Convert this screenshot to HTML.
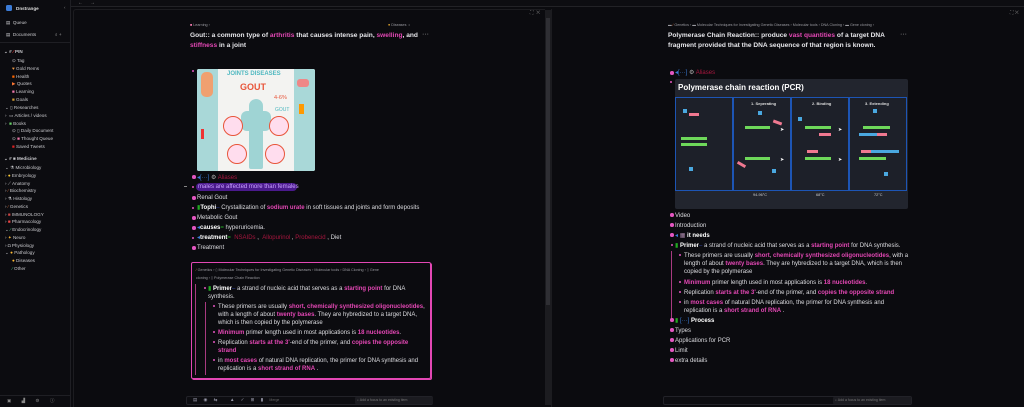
<!DOCTYPE html>
<html><head><meta charset="utf-8"><style>
*{margin:0;padding:0;box-sizing:border-box}
body{width:1024px;height:407px;background:#0b0b0f;font-family:"Liberation Sans",sans-serif;color:#d8d8dc;position:relative;overflow:hidden}
.a{position:absolute;white-space:nowrap}
.sb{font-size:4.6px;color:#c8c8cc}
.t{font-size:6px;color:#dcdce0;line-height:8px}
.p{color:#e347b4;font-weight:bold}
.r{color:#a8163e}
.b{font-weight:bold;color:#fff}
.dot{position:absolute;width:3.6px;height:3.6px;border-radius:50%;background:#e356c0}
.sd{position:absolute;width:2.2px;height:2.2px;border-radius:50%;background:#e356c0}
.ttl{font-size:6.6px;font-weight:bold;color:#e6e6ea;line-height:10px}
.bc{font-size:3.7px;color:#9a9aa0}
.st{position:absolute;height:3px}
</style></head><body>
<div class="a" style="left:0;top:0;width:1024px;height:7px;background:#0d0d11;border-bottom:1px solid #222226"></div>
<div class="a" style="left:78px;top:0;font-size:5px;color:#888">←</div>
<div class="a" style="left:90px;top:0;font-size:5px;color:#888">→</div>
<div class="a" style="left:0;top:0;width:71px;height:407px;background:#0c0c10;border-right:1px solid #1f1f24"></div>
<div class="a" style="left:6px;top:5px;width:6px;height:6px;background:#3b7bd6;border-radius:1.5px"></div>
<div class="a sb" style="left:16px;top:6px;font-weight:bold;color:#ddd">Dnstrange</div>
<div class="a sb" style="left:64px;top:5px;color:#888">‹</div>
<div class="a sb" style="left:6px;top:20px">▤ &nbsp;Queue</div>
<div class="a sb" style="left:6px;top:32px">▤ &nbsp;Documents</div>
<div class="a sb" style="left:55px;top:32px;color:#999">⌕ +</div>
<div class="a" style="left:0;top:42px;width:71px;height:1px;background:#1f1f24"></div>
<div class="a sb" style="left:4px;top:49px;font-weight:bold">⌄ # <span style="color:#e33">⁄</span> PIN</div>
<div class="a sb" style="left:12px;top:57px;line-height:7.75px">⊙ Tag<br><span style="color:#e94">♥</span> Gold Rems<br><span style="color:#f60">■</span> Health<br><span style="color:#f73">▶</span> Quotes<br><span style="color:#e7a">■</span> Learning<br><span style="color:#c93">■</span> Goals</div>
<div class="a sb" style="left:5px;top:104px;line-height:7.75px">⌄ ▯ Researches<br>› &nbsp;▭ Articles / videos<br>› &nbsp;<span style="color:#6c6">■</span> Books</div>
<div class="a sb" style="left:12px;top:127px;line-height:7.75px">⊙ ▯ Daily Document<br>⊙ <span style="color:#e7a">■</span> Thought Queue<br><span style="color:#d22">■</span> Saved Tweets</div>
<div class="a sb" style="left:4px;top:156px;font-weight:bold">⌄ # ■ Medicine</div>
<div class="a sb" style="left:5px;top:164px;line-height:7.75px">⌄ ⚗ Microbiology<br>› <span style="color:#fc3">●</span> Embryology<br>› ⟋ Anatomy<br>› <span style="color:#c63">⁄</span> Biochemistry<br>› ⚗ Histology<br>› <span style="color:#c63">⁄</span> Genetics<br>› <span style="color:#c44">■</span> IMMUNOLOGY<br>› <span style="color:#e44">■</span> Pharmacology<br>⌄ <span style="color:#4c8">⁄</span> Endocrinology<br>› <span style="color:#fb3">✦</span> Neuro<br>› ◘ Physiology<br>⌄ <span style="color:#fb3">●</span> Pathology</div>
<div class="a sb" style="left:12px;top:257px;line-height:7.75px"><span style="color:#fb3">●</span> Diseases<br><span style="color:#4c8">⁄</span> Other</div>
<div class="a" style="left:0;top:395px;width:71px;height:1px;background:#1f1f24"></div>
<div class="a sb" style="left:7px;top:398px;color:#888;word-spacing:9px">▣ ▟ ⚙ ⓘ</div>

<div class="a" style="left:73px;top:9px;width:472px;height:398px;border-left:1px solid #1c1c20;border-top:1px solid #1c1c20;border-radius:3px 0 0 0"></div>
<div class="a" style="left:530px;top:10px;font-size:5px;color:#777">⛶ &nbsp;✕</div>
<div class="a" style="left:545px;top:10px;width:6px;height:395px;background:#1c1c20"></div>
<div class="a" style="left:546px;top:18px;width:4px;height:287px;background:#2f2f34"></div>
<div class="a" style="left:551px;top:9px;width:1px;height:398px;background:#1c1c20"></div>
<div class="a bc" style="left:190px;top:23px"><span style="color:#e7a">■</span> Learning ›</div>
<div class="a bc" style="left:388px;top:23px"><span style="color:#fb3">●</span> Diseases &nbsp;•</div>
<div class="a ttl" style="left:190px;top:31px">Gout:: a common type of <span class="p">arthritis</span> that causes intense pain, <span class="p">swelling</span>, and<br><span class="p">stiffness</span> in a joint</div>
<div class="a" style="left:422px;top:31px;font-size:7px;color:#aaa">···</div>
<div class="sd" style="left:192px;top:70px"></div>
<div class="a" style="left:197px;top:69px;width:118px;height:102px;background:#f3f3f1;border-radius:2px;overflow:hidden">
 <div class="a" style="left:0;top:0;width:21px;height:102px;background:#a9d8d8"></div>
 <div class="a" style="left:97px;top:0;width:21px;height:102px;background:#a9d8d8"></div>
 <div class="a" style="left:4px;top:3px;width:12px;height:25px;background:#f0a070;border-radius:5px"></div>
 <div class="a" style="left:30px;top:2px;font-size:6px;font-weight:bold;color:#4fb8c0">JOINTS DISEASES</div>
 <div class="a" style="left:43px;top:13px;font-size:9px;font-weight:bold;color:#e8553a">GOUT</div>
 <div class="a" style="left:77px;top:26px;font-size:5.5px;color:#e8553a">4-6%</div>
 <div class="a" style="left:78px;top:38px;font-size:5px;color:#4fb8c0">GOUT</div>
 <div class="a" style="left:52px;top:30px;width:14px;height:70px;background:#9fd4d4;border-radius:7px 7px 2px 2px"></div>
 <div class="a" style="left:44px;top:42px;width:30px;height:20px;background:#9fd4d4;border-radius:6px"></div>
 <div class="a" style="left:26px;top:47px;width:20px;height:20px;border:1.5px solid #e8553a;border-radius:50%;background:#fde"></div>
 <div class="a" style="left:72px;top:47px;width:20px;height:20px;border:1.5px solid #e8553a;border-radius:50%;background:#fde"></div>
 <div class="a" style="left:30px;top:75px;width:20px;height:20px;border:1.5px solid #e8553a;border-radius:50%;background:#fde"></div>
 <div class="a" style="left:68px;top:75px;width:20px;height:20px;border:1.5px solid #e8553a;border-radius:50%;background:#fde"></div>
 <div class="a" style="left:100px;top:10px;width:12px;height:8px;background:#e88;border-radius:3px"></div>
 <div class="a" style="left:102px;top:35px;width:5px;height:10px;background:#f90"></div>
 <div class="a" style="left:4px;top:60px;width:3px;height:10px;background:#e33"></div>
</div>
<div class="dot" style="left:192px;top:175px"></div>
<div class="a t" style="left:197px;top:174px"><span style="color:#3a7bd5">◂[···]</span> <span style="color:#aaa">⚙</span> <span class="r">Aliases</span></div>
<div class="sd" style="left:192px;top:186px"></div>
<div class="a" style="left:184px;top:186px;width:3px;height:1px;background:#888"></div>
<div class="a" style="left:196px;top:183px;width:101px;height:8px;background:#4a1a8c;border-radius:4px"></div>
<div class="a t" style="left:198px;top:183px;color:#c9a0ff">males are affected more than females</div>
<div class="dot" style="left:192px;top:196px"></div>
<div class="a t" style="left:197px;top:194px">Renal Gout</div>
<div class="sd" style="left:192px;top:207px"></div>
<div class="a t" style="left:197px;top:204px"><span style="color:#2a2">▮</span><span class="b">Tophi</span><span style="color:#34a">–</span> Crystallization of <span class="p">sodium urate</span> in soft tissues and joints and form deposits</div>
<div class="dot" style="left:192px;top:216px"></div>
<div class="a t" style="left:197px;top:214px">Metabolic Gout</div>
<div class="dot" style="left:192px;top:226px"></div>
<div class="a t" style="left:197px;top:224px"><span style="color:#3a7bd5">◂</span><span class="b">causes</span><span style="color:#2a2">=</span> hyperuricemia.</div>
<div class="sd" style="left:192px;top:237px"></div>
<div class="a t" style="left:197px;top:234px"><span style="color:#3a7bd5">◂</span><span class="b">treatment</span><span style="color:#2a2">=</span> &nbsp;<span class="r">NSAIDs</span> , &nbsp;<span class="r">Allopurinol</span> , <span class="r">Probenecid</span> , Diet</div>
<div class="dot" style="left:192px;top:246px"></div>
<div class="a t" style="left:197px;top:244px">Treatment</div>
<div class="a" style="left:191px;top:262px;width:240px;height:117px;border:1px solid #e347b4;border-radius:2px;box-shadow:1px 1px 0 #e347b4"></div>
<div class="a bc" style="left:196px;top:268px"><span style="color:#c63">⁄</span> Genetics › ▯ Molecular Techniques for Investigating Genetic Diseases › Molecular tools › DNA Cloning › ▯ Gene</div>
<div class="a bc" style="left:196px;top:276px">cloning › ▯ Polymerase Chain Reaction</div>
<div class="a" style="left:195px;top:284px;width:1px;height:91px;background:#a83a80"></div>
<div class="sd" style="left:204px;top:287px"></div>
<div class="a t" style="left:208px;top:285px"><span style="color:#2a2">▮</span> <span class="b">Primer</span><span style="color:#34a">–</span> a strand of nucleic acid that serves as a <span class="p">starting point</span> for DNA<br>synthesis.</div>
<div class="a" style="left:205px;top:302px;width:1px;height:73px;background:#a83a80"></div>
<div class="sd" style="left:213px;top:305px"></div>
<div class="a t" style="left:218px;top:303px">These primers are usually <span class="p">short, chemically synthesized oligonucleotides</span>,<br>with a length of about <span class="p">twenty bases</span>. They are hybredized to a target DNA,<br>which is then copied by the polymerase</div>
<div class="sd" style="left:213px;top:331px"></div>
<div class="a t" style="left:218px;top:329px"><span class="p">Minimum</span> primer length used in most applications is <span class="p">18 nucleotides</span>.</div>
<div class="sd" style="left:213px;top:341px"></div>
<div class="a t" style="left:218px;top:339px">Replication <span class="p">starts at the 3'</span>-end of the primer, and <span class="p">copies the opposite</span><br><span class="p">strand</span></div>
<div class="sd" style="left:213px;top:359px"></div>
<div class="a t" style="left:218px;top:357px">in <span class="p">most cases</span> of natural DNA replication, the primer for DNA synthesis and<br>replication is a <span class="p">short strand of RNA</span> .</div>
<div class="a" style="left:186px;top:396px;width:247px;height:9px;border:1px solid #222228;border-radius:2px;background:#0d0d11"></div>
<div class="a" style="left:193px;top:397px;font-size:4.5px;color:#99a;word-spacing:5px">▤ ◉ ⇆ &nbsp;▲ ✓ ⊞ ▮ <span style="font-size:3.5px;color:#666">Merge</span></div>
<div class="a" style="left:355px;top:397px;width:78px;height:7px;background:#1b1b20;border-radius:1px"></div>
<div class="a" style="left:357px;top:398px;font-size:3.5px;color:#777">⌕ Add a focus to an existing item</div>

<div class="a" style="left:1010px;top:10px;font-size:5px;color:#777">⛶ ✕</div>
<div class="a bc" style="left:668px;top:23px">▬ <span style="color:#c63">⁄</span> Genetics › ▬ Molecular Techniques for Investigating Genetic Diseases › Molecular tools › DNA Cloning › ▬ Gene cloning ›</div>
<div class="a ttl" style="left:668px;top:31px">Polymerase Chain Reaction:: produce <span class="p">vast quantities</span> of a target DNA<br>fragment provided that the DNA sequence of that region is known.</div>
<div class="a" style="left:900px;top:31px;font-size:7px;color:#aaa">···</div>
<div class="dot" style="left:670px;top:71px"></div>
<div class="a t" style="left:675px;top:69px"><span style="color:#3a7bd5">◂[···]</span> <span style="color:#aaa">⚙</span> <span class="r">Aliases</span></div>
<div class="sd" style="left:670px;top:81px"></div>
<div class="a" style="left:675px;top:79px;width:233px;height:130px;background:#22252e;border-radius:2px;overflow:hidden">
 <div class="a" style="left:3px;top:4px;font-size:8px;font-weight:bold;color:#fff">Polymerase chain reaction (PCR)</div>
 <div class="a" style="left:0;top:18px;width:58px;height:94px;border:1px solid #1d55b5;background:#1d2029"></div>
 <div class="a" style="left:58px;top:18px;width:58px;height:94px;border:1px solid #1d55b5;background:#1d2029"></div>
 <div class="a" style="left:116px;top:18px;width:58px;height:94px;border:1px solid #1d55b5;background:#1d2029"></div>
 <div class="a" style="left:174px;top:18px;width:58px;height:94px;border:1px solid #1d55b5;background:#1d2029"></div>
 <div class="a" style="left:76px;top:22px;font-size:4px;font-weight:bold;color:#ddd">1. Seperating</div>
 <div class="a" style="left:137px;top:22px;font-size:4px;font-weight:bold;color:#ddd">2. Binding</div>
 <div class="a" style="left:190px;top:22px;font-size:4px;font-weight:bold;color:#ddd">3. Extending</div>
 <div class="st" style="left:6px;top:58px;width:26px;background:#6ed85a"></div>
 <div class="st" style="left:6px;top:64px;width:26px;background:#6ed85a"></div>
 <div class="st" style="left:14px;top:34px;width:10px;background:#f07890"></div>
 <div class="st" style="left:70px;top:47px;width:25px;background:#6ed85a"></div>
 <div class="st" style="left:70px;top:78px;width:25px;background:#6ed85a"></div>
 <div class="st" style="left:98px;top:42px;width:9px;background:#f07890;transform:rotate(20deg)"></div>
 <div class="st" style="left:62px;top:84px;width:9px;background:#f07890;transform:rotate(30deg)"></div>
 <div class="st" style="left:130px;top:47px;width:26px;background:#6ed85a"></div>
 <div class="st" style="left:144px;top:54px;width:12px;background:#f07890"></div>
 <div class="st" style="left:130px;top:78px;width:26px;background:#6ed85a"></div>
 <div class="st" style="left:132px;top:71px;width:11px;background:#f07890"></div>
 <div class="st" style="left:188px;top:47px;width:27px;background:#6ed85a"></div>
 <div class="st" style="left:184px;top:54px;width:28px;background:#4aa8e0"></div>
 <div class="st" style="left:202px;top:54px;width:10px;background:#f07890"></div>
 <div class="st" style="left:186px;top:71px;width:38px;background:#4aa8e0"></div>
 <div class="st" style="left:186px;top:71px;width:10px;background:#f07890"></div>
 <div class="st" style="left:184px;top:78px;width:27px;background:#6ed85a"></div>
 <div class="a" style="left:8px;top:30px;width:4px;height:4px;background:#4aa8e0"></div>
 <div class="a" style="left:14px;top:88px;width:4px;height:4px;background:#4aa8e0"></div>
 <div class="a" style="left:83px;top:32px;width:4px;height:4px;background:#4aa8e0"></div>
 <div class="a" style="left:97px;top:90px;width:4px;height:4px;background:#4aa8e0"></div>
 <div class="a" style="left:123px;top:38px;width:4px;height:4px;background:#4aa8e0"></div>
 <div class="a" style="left:198px;top:30px;width:4px;height:4px;background:#4aa8e0"></div>
 <div class="a" style="left:209px;top:93px;width:4px;height:4px;background:#4aa8e0"></div>
 <div class="a" style="left:105px;top:48px;font-size:5px;color:#fff">➤</div>
 <div class="a" style="left:105px;top:78px;font-size:5px;color:#fff">➤</div>
 <div class="a" style="left:163px;top:48px;font-size:5px;color:#fff">➤</div>
 <div class="a" style="left:163px;top:78px;font-size:5px;color:#fff">➤</div>
 <div class="a" style="left:78px;top:114px;font-size:3.8px;color:#ccc">94-96°C</div>
 <div class="a" style="left:141px;top:114px;font-size:3.8px;color:#ccc">68°C</div>
 <div class="a" style="left:199px;top:114px;font-size:3.8px;color:#ccc">72°C</div>
</div>
<div class="dot" style="left:670px;top:213px"></div>
<div class="a t" style="left:675px;top:212px">Video</div>
<div class="dot" style="left:670px;top:223px"></div>
<div class="a t" style="left:675px;top:222px">Introduction</div>
<div class="dot" style="left:670px;top:233px"></div>
<div class="a t" style="left:675px;top:232px"><span style="color:#3a7bd5">◂</span> <span style="color:#a8a">▦</span> <span class="b">it needs</span></div>
<div class="sd" style="left:671px;top:244px"></div>
<div class="a t" style="left:675px;top:242px"><span style="color:#2a2">▮</span> <span class="b">Primer</span><span style="color:#34a">–</span> a strand of nucleic acid that serves as a <span class="p">starting point</span> for DNA synthesis.</div>
<div class="a" style="left:671px;top:251px;width:1px;height:68px;background:#a83a80"></div>
<div class="sd" style="left:679px;top:254px"></div>
<div class="a t" style="left:684px;top:252px">These primers are usually <span class="p">short</span>, <span class="p">chemically synthesized oligonucleotides</span>, with a<br>length of about <span class="p">twenty bases</span>. They are hybredized to a target DNA, which is then<br>copied by the polymerase</div>
<div class="sd" style="left:679px;top:281px"></div>
<div class="a t" style="left:684px;top:279px"><span class="p">Minimum</span> primer length used in most applications is <span class="p">18 nucleotides</span>.</div>
<div class="sd" style="left:679px;top:291px"></div>
<div class="a t" style="left:684px;top:289px">Replication <span class="p">starts at the 3'</span>-end of the primer, and <span class="p">copies the opposite strand</span></div>
<div class="sd" style="left:679px;top:301px"></div>
<div class="a t" style="left:684px;top:299px">in <span class="p">most cases</span> of natural DNA replication, the primer for DNA synthesis and<br>replication is a <span class="p">short strand of RNA</span> .</div>
<div class="dot" style="left:670px;top:318px"></div>
<div class="a t" style="left:675px;top:317px"><span style="color:#2a2">▮</span> <span style="color:#3a7bd5">[···]</span> <span class="b">Process</span></div>
<div class="dot" style="left:670px;top:328px"></div>
<div class="a t" style="left:675px;top:327px">Types</div>
<div class="dot" style="left:670px;top:338px"></div>
<div class="a t" style="left:675px;top:337px">Applications for PCR</div>
<div class="dot" style="left:670px;top:348px"></div>
<div class="a t" style="left:675px;top:347px">Limit</div>
<div class="dot" style="left:670px;top:358px"></div>
<div class="a t" style="left:675px;top:357px">extra details</div>
<div class="a" style="left:663px;top:396px;width:249px;height:9px;border:1px solid #222228;border-radius:2px;background:#0d0d11"></div>
<div class="a" style="left:833px;top:397px;width:78px;height:7px;background:#1b1b20;border-radius:1px"></div>
<div class="a" style="left:835px;top:398px;font-size:3.5px;color:#777">⌕ Add a focus to an existing item</div>
</body></html>
